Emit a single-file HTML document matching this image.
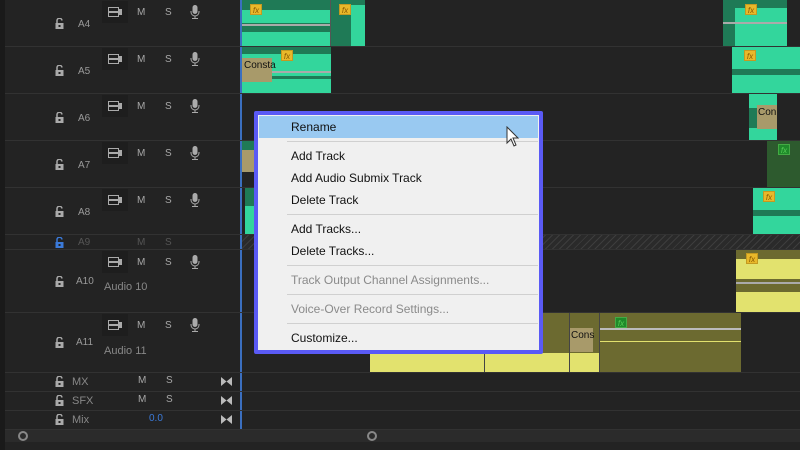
<!DOCTYPE html>
<html><head><style>
*{margin:0;padding:0;box-sizing:border-box}
body{width:800px;height:450px;background:#232323;position:relative;overflow:hidden;font-family:"Liberation Sans",sans-serif}
.a{position:absolute}
.hl{position:absolute;left:5px;width:795px;height:1px;background:#323232}
.t{position:absolute;color:#9a9a9a;font-size:10px}
.ic{position:absolute;color:#a8a8a8;font-size:10px}
.g{position:absolute;background:#1f7a56;overflow:hidden}
.g .w{position:absolute;left:0;right:0;background:#33d69c}
.fx{position:absolute;width:12px;height:11px;background:#e8b82a;color:#8a5a00;font-size:8px;font-style:italic;text-align:center;line-height:11px;border:1px solid #c49a20}
.fxg{background:#1f8a2a;color:#5c5;border-color:#4a4}
.y{position:absolute;background:#6c6a30;overflow:hidden}
.y .w{position:absolute;left:0;right:0;background:#e2e26e}
.m{position:absolute;left:291px;font-size:12px;color:#111;font-family:"Liberation Sans",sans-serif}
.dis{color:#8a8a8a}
.sep{position:absolute;left:287px;width:251px;height:1px;background:#d0d0d0}
.box{position:absolute;width:26px;height:22px;background:#1e1e1e}
svg{position:absolute}
</style></head><body>
<div class="a" style="left:0;top:0;width:5px;height:450px;background:#1a1a1a"></div>
<div class="a" style="left:240px;top:0;width:2px;height:430px;background:#3b6fbf"></div>
<div class="hl" style="top:46px"></div><div class="hl" style="top:93px"></div><div class="hl" style="top:140px"></div><div class="hl" style="top:187px"></div><div class="hl" style="top:234px"></div><div class="hl" style="top:249px"></div><div class="hl" style="top:312px"></div><div class="hl" style="top:372px"></div><div class="hl" style="top:391px"></div><div class="hl" style="top:410px"></div><div class="hl" style="top:429px"></div>
<div class="a" style="left:242px;top:235px;width:558px;height:14px;background:repeating-linear-gradient(135deg,#2a2a2a 0 4px,#3d3d3d 4px 5px)"></div>
<div id="hdrs"></div>
<script>
function lock(x,y,c){return '<svg style="left:'+x+'px;top:'+y+'px" width="9" height="11" viewBox="0 0 9 11"><path d="M2 5 V3 A2.5 2.5 0 0 1 7 2.5" fill="none" stroke="'+c+'" stroke-width="1.5"/><rect x="0.5" y="5" width="8" height="6" fill="'+c+'"/><rect x="3.5" y="7" width="2" height="2" fill="#232323"/></svg>';}
function trk(x,y){return '<svg style="left:'+x+'px;top:'+y+'px" width="14" height="10" viewBox="0 0 14 10"><rect x="0.5" y="0.5" width="10" height="4" fill="none" stroke="#aaa"/><rect x="0.5" y="5.5" width="10" height="4" fill="none" stroke="#aaa"/><rect x="10" y="2" width="4" height="6" fill="#aaa"/></svg>';}
function mic(x,y){return '<svg style="left:'+x+'px;top:'+y+'px" width="10" height="14" viewBox="0 0 10 14"><rect x="2.5" y="0" width="5" height="9" rx="2.5" fill="#aaa"/><path d="M1 6 V7 A4 4 0 0 0 9 7 V6" fill="none" stroke="#aaa"/><path d="M5 11 V13 M2 13.5 H8" stroke="#aaa"/></svg>';}
function bow(x,y){return '<svg style="left:'+x+'px;top:'+y+'px" width="11" height="9" viewBox="0 0 11 9"><path d="M0 0 V9 L5.5 4.5 Z M11 0 V9 L5.5 4.5 Z" fill="#bbb"/></svg>';}
var rows=[["A4",0],["A5",47],["A6",94],["A7",141],["A8",188]];
var h="";
function top4(y){return '<div class="box" style="left:102px;top:'+(y+1)+'px"></div>'+trk(108,y+7)+'<div class="ic" style="left:137px;top:'+(y+7)+'px">M</div><div class="ic" style="left:165px;top:'+(y+7)+'px">S</div>'+mic(190,y+5);}
rows.forEach(function(r){var y=r[1];
h+=top4(y)+lock(55,y+18,"#aaa");
h+='<div class="t" style="left:78px;top:'+(y+19)+'px">'+r[0]+'</div>';});
h+=lock(55,237,"#3b7ad9")+'<div class="t" style="left:78px;top:237px;color:#555">A9</div><div class="t" style="left:137px;top:237px;color:#555">M</div><div class="t" style="left:165px;top:237px;color:#555">S</div>';
[["A10",250,"Audio 10",26,31],["A11",313,"Audio 11",24,32]].forEach(function(r){var y=r[1];
h+=top4(y)+lock(55,y+r[3],"#aaa");
h+='<div class="t" style="left:76px;top:'+(y+r[3])+'px">'+r[0]+'</div>';
h+='<div class="t" style="left:104px;top:'+(y+r[4])+'px;font-size:11px;color:#888">'+r[2]+'</div>';});
[["MX",375],["SFX",394],["Mix",413]].forEach(function(r,i){var y=r[1];
h+=lock(55,y+1,"#aaa");
h+='<div class="t" style="left:72px;top:'+(y+1)+'px;font-size:11px;color:#888">'+r[0]+'</div>';
if(i<2){h+='<div class="ic" style="left:138px;top:'+y+'px">M</div><div class="ic" style="left:166px;top:'+y+'px">S</div>';}
else h+='<div class="t" style="left:149px;top:'+y+'px;color:#3b7ad9">0.0</div>';
h+=bow(221,y+2);});
document.getElementById("hdrs").innerHTML=h;
</script>
<div class="g" style="left:242px;top:0;width:88px;height:46px"><div class="w" style="top:10px;height:13px"></div><div class="w" style="top:32px;height:14px"></div><div class="a" style="left:0;right:0;top:24px;height:2px;background:#aaa"></div></div>
<div class="fx" style="left:250px;top:4px">fx</div>
<div class="g" style="left:330px;top:0;width:35px;height:46px;border-left:1px solid #555"><div class="w" style="top:5px;height:41px;left:20px"></div></div>
<div class="fx" style="left:339px;top:4px">fx</div>
<div class="g" style="left:723px;top:0;width:64px;height:46px"><div class="w" style="top:8px;height:38px;left:12px"></div><div class="a" style="left:0;right:0;top:22px;height:2px;background:#aaa"></div></div>
<div class="fx" style="left:745px;top:4px">fx</div>
<div class="g" style="left:242px;top:47px;width:89px;height:46px"><div class="w" style="top:7px;height:22px"></div><div class="w" style="top:32px;height:14px"></div><div class="a" style="left:0;right:0;top:24px;height:2px;background:#aaa"></div></div>
<div class="a" style="left:242px;top:58px;width:30px;height:24px;background:#a89a6a;font-size:10px;color:#111;padding:2px">Consta</div>
<div class="fx" style="left:281px;top:50px">fx</div>
<div class="g" style="left:732px;top:47px;width:68px;height:46px"><div class="w" style="top:0;height:22px"></div><div class="w" style="top:28px;height:18px"></div></div>
<div class="fx" style="left:744px;top:50px">fx</div>
<div class="g" style="left:749px;top:94px;width:28px;height:46px"><div class="w" style="top:0;height:14px"></div><div class="w" style="top:34px;height:12px"></div></div>
<div class="a" style="left:757px;top:105px;width:20px;height:24px;background:#a89a6a;font-size:10px;color:#111;padding:2px 1px">Con</div>
<div class="a" style="left:242px;top:150px;width:12px;height:22px;background:#a89a6a"></div>
<div class="g" style="left:242px;top:141px;width:12px;height:9px"></div>
<div class="a" style="left:767px;top:141px;width:33px;height:46px;background:#2d5a2e"></div>
<div class="fx fxg" style="left:778px;top:144px">fx</div>
<div class="g" style="left:245px;top:188px;width:9px;height:46px"><div class="w" style="top:18px;height:28px"></div></div>
<div class="g" style="left:753px;top:188px;width:47px;height:46px"><div class="w" style="top:0;height:22px"></div><div class="w" style="top:28px;height:18px"></div></div>
<div class="fx" style="left:763px;top:191px">fx</div>
<div class="y" style="left:736px;top:250px;width:64px;height:62px"><div class="w" style="top:9px;height:20px"></div><div class="w" style="top:42px;height:20px"></div><div class="a" style="left:0;right:0;top:32px;height:2px;background:#aaa"></div></div>
<div class="fx" style="left:746px;top:253px">fx</div>
<div class="y" style="left:370px;top:313px;width:371px;height:59px"><div class="w" style="top:40px;height:19px;right:142px"></div><div class="a" style="left:230px;right:0;top:15px;height:2px;background:#bbb"></div><div class="a" style="left:230px;right:0;top:28px;height:1px;background:#e2e26e"></div></div>
<div class="a" style="left:484px;top:313px;width:1px;height:59px;background:#444"></div>
<div class="a" style="left:569px;top:313px;width:1px;height:59px;background:#444"></div>
<div class="a" style="left:599px;top:313px;width:1px;height:59px;background:#444"></div>
<div class="a" style="left:570px;top:328px;width:23px;height:24px;background:#a89a6a;font-size:10px;color:#111;padding:2px 1px">Cons</div>
<div class="fx fxg" style="left:615px;top:317px">fx</div>
<div class="a" style="left:5px;top:430px;width:795px;height:12px;background:#2b2b2b"></div>
<div class="a" style="left:18px;top:431px;width:10px;height:10px;border:2px solid #888;border-radius:50%"></div>
<div class="a" style="left:367px;top:431px;width:10px;height:10px;border:2px solid #888;border-radius:50%"></div>
<div class="a" style="left:254px;top:111px;width:289px;height:243px;background:#5a5af5;border-radius:2px"></div>
<div class="a" style="left:258px;top:115px;width:281px;height:235px;background:#f0f0f0"></div>
<div class="a" style="left:259px;top:116px;width:279px;height:22px;background:#99c9f1"></div>
<div class="m" style="top:120px">Rename</div>
<div class="sep" style="top:141px"></div>
<div class="m" style="top:149px">Add Track</div>
<div class="m" style="top:171px">Add Audio Submix Track</div>
<div class="m" style="top:193px">Delete Track</div>
<div class="sep" style="top:214px"></div>
<div class="m" style="top:222px">Add Tracks...</div>
<div class="m" style="top:244px">Delete Tracks...</div>
<div class="sep" style="top:265px"></div>
<div class="m dis" style="top:273px">Track Output Channel Assignments...</div>
<div class="sep" style="top:294px"></div>
<div class="m dis" style="top:302px">Voice-Over Record Settings...</div>
<div class="sep" style="top:323px"></div>
<div class="m" style="top:331px">Customize...</div>
<svg style="left:506px;top:126px" width="14" height="22" viewBox="0 0 14 22"><path d="M1 1 L1 17 L5 13 L8 20 L10 19 L7 12 L12 12 Z" fill="#fff" stroke="#333" stroke-width="1"/></svg>
</body></html>
